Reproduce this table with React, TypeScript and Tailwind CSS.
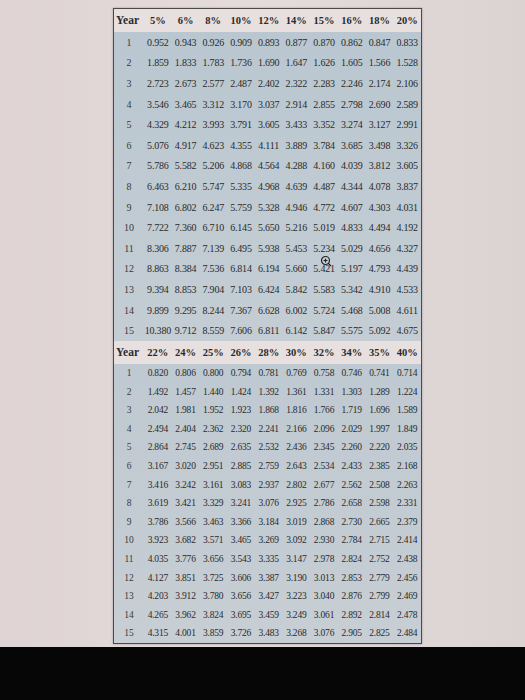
import { ZoomIn } from "lucide-react";

const topCols = ["5%", "6%", "8%", "10%", "12%", "14%", "15%", "16%", "18%", "20%"];
const botCols = ["22%", "24%", "25%", "26%", "28%", "30%", "32%", "34%", "35%", "40%"];

const topRows = [
  "0.952 0.943 0.926 0.909 0.893 0.877 0.870 0.862 0.847 0.833",
  "1.859 1.833 1.783 1.736 1.690 1.647 1.626 1.605 1.566 1.528",
  "2.723 2.673 2.577 2.487 2.402 2.322 2.283 2.246 2.174 2.106",
  "3.546 3.465 3.312 3.170 3.037 2.914 2.855 2.798 2.690 2.589",
  "4.329 4.212 3.993 3.791 3.605 3.433 3.352 3.274 3.127 2.991",
  "5.076 4.917 4.623 4.355 4.111 3.889 3.784 3.685 3.498 3.326",
  "5.786 5.582 5.206 4.868 4.564 4.288 4.160 4.039 3.812 3.605",
  "6.463 6.210 5.747 5.335 4.968 4.639 4.487 4.344 4.078 3.837",
  "7.108 6.802 6.247 5.759 5.328 4.946 4.772 4.607 4.303 4.031",
  "7.722 7.360 6.710 6.145 5.650 5.216 5.019 4.833 4.494 4.192",
  "8.306 7.887 7.139 6.495 5.938 5.453 5.234 5.029 4.656 4.327",
  "8.863 8.384 7.536 6.814 6.194 5.660 5.421 5.197 4.793 4.439",
  "9.394 8.853 7.904 7.103 6.424 5.842 5.583 5.342 4.910 4.533",
  "9.899 9.295 8.244 7.367 6.628 6.002 5.724 5.468 5.008 4.611",
  "10.380 9.712 8.559 7.606 6.811 6.142 5.847 5.575 5.092 4.675",
];

const botRows = [
  "0.820 0.806 0.800 0.794 0.781 0.769 0.758 0.746 0.741 0.714",
  "1.492 1.457 1.440 1.424 1.392 1.361 1.331 1.303 1.289 1.224",
  "2.042 1.981 1.952 1.923 1.868 1.816 1.766 1.719 1.696 1.589",
  "2.494 2.404 2.362 2.320 2.241 2.166 2.096 2.029 1.997 1.849",
  "2.864 2.745 2.689 2.635 2.532 2.436 2.345 2.260 2.220 2.035",
  "3.167 3.020 2.951 2.885 2.759 2.643 2.534 2.433 2.385 2.168",
  "3.416 3.242 3.161 3.083 2.937 2.802 2.677 2.562 2.508 2.263",
  "3.619 3.421 3.329 3.241 3.076 2.925 2.786 2.658 2.598 2.331",
  "3.786 3.566 3.463 3.366 3.184 3.019 2.868 2.730 2.665 2.379",
  "3.923 3.682 3.571 3.465 3.269 3.092 2.930 2.784 2.715 2.414",
  "4.035 3.776 3.656 3.543 3.335 3.147 2.978 2.824 2.752 2.438",
  "4.127 3.851 3.725 3.606 3.387 3.190 3.013 2.853 2.779 2.456",
  "4.203 3.912 3.780 3.656 3.427 3.223 3.040 2.876 2.799 2.469",
  "4.265 3.962 3.824 3.695 3.459 3.249 3.061 2.892 2.814 2.478",
  "4.315 4.001 3.859 3.726 3.483 3.268 3.076 2.905 2.825 2.484",
];

const grid = "grid grid-cols-[30px_repeat(10,minmax(0,1fr))] items-center";

const Header = ({ cols }: { cols: string[] }) => (
  <div className={`${grid} h-[23px] bg-[#e7e0df] text-[#2a2a2a] font-bold`}>
    <div className="pl-[2px] text-[11.5px]">Year</div>
    {cols.map((c) => (
      <div key={c} className="text-center text-[10.5px]">
        {c}
      </div>
    ))}
  </div>
);

const Body = ({ rows, small }: { rows: string[]; small?: boolean }) => (
  <div
    className={
      small
        ? "bg-gradient-to-b from-[#bfc9d1] to-[#c7ced4] text-[9.5px]"
        : "bg-gradient-to-b from-[#bac7d0] to-[#c4cdd4] text-[10px]"
    }
  >
    {rows.map((r, i) => (
      <div key={i} className={`${grid} ${small ? "h-[18.6px]" : "h-[20.6px]"}`}>
        <div className="text-center text-[#3a3a3a]">{i + 1}</div>
        {r.split(" ").map((v, j) => (
          <div key={j} className="text-center tracking-[-0.2px] whitespace-nowrap">
            {v}
          </div>
        ))}
      </div>
    ))}
  </div>
);

export default function App() {
  return (
    <div className="h-[700px] w-full flex flex-col bg-[#060606] font-['Liberation_Serif',serif] text-[#2a2a2a]">
      <div className="h-[647px] pt-[8px] pl-[113px] bg-gradient-to-r from-[#dfd4d3] via-[#e4dcdb] to-[#dbd3d2] relative">
        <div className="w-[309px] border-[1.5px] border-[#4a4a4a] shadow-[0_0_2px_rgba(0,0,0,0.3)]">
          <Header cols={topCols} />
          <Body rows={topRows} />
          <Header cols={botCols} />
          <Body rows={botRows} small />
        </div>
        <div className="absolute left-[320px] top-[255px] text-[#222]">
          <ZoomIn size={12} strokeWidth={2.4} />
        </div>
      </div>
      <div className="flex-1" />
    </div>
  );
}
